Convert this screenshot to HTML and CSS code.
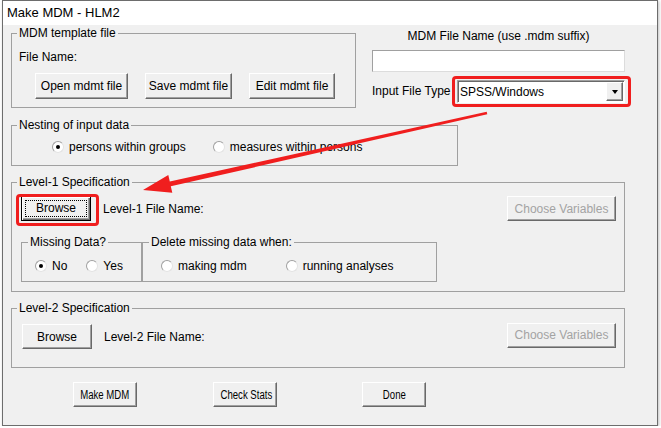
FILE: index.html
```html
<!DOCTYPE html>
<html lang="en">
<head>
  <meta charset="UTF-8" />
  <title>Make MDM - HLM2</title>
  <link rel="stylesheet" href="styles.css">
</head>
<body>

  <div class="window">
    <div class="titlebar">Make MDM - HLM2</div>

    <div class="dialog">
      <div class="top-row">
        <fieldset class="group template">
          <legend>MDM template file</legend>
          <div class="file-name">File Name:</div>
          <div class="btn-row">
            <button class="btn btn-open">Open mdmt file</button>
            <button class="btn btn-save">Save mdmt file</button>
            <button class="btn btn-edit">Edit mdmt file</button>
          </div>
        </fieldset>

        <div class="mdm-file">
          <div class="caption">MDM File Name (use .mdm suffix)</div>
          <input class="text-box" type="text" />
          <div class="type-row">
            <span class="type-label">Input File Type</span>
            <div class="combo callout callout-combo">
              <span>SPSS/Windows</span>
              <span class="combo-arrow"></span>
            </div>
          </div>
        </div>
      </div>

      <fieldset class="group nesting">
        <legend>Nesting of input data</legend>
        <div class="radio-row">
          <label class="radio checked"><span class="dot"></span>persons within groups</label>
          <label class="radio"><span class="dot"></span>measures within persons</label>
        </div>
      </fieldset>

      <fieldset class="group spec level1">
        <legend>Level-1 Specification</legend>
        <div class="spec-row">
          <span class="callout callout-browse">
            <button class="btn btn-browse focused"><span class="focus-rect">Browse</span></button>
          </span>
          <span class="spec-label">Level-1 File Name:</span>
          <button class="btn btn-choose" disabled>Choose Variables</button>
        </div>
        <div class="missing-row">
          <fieldset class="group sub missing">
            <legend>Missing Data?</legend>
            <div class="radio-row">
              <label class="radio checked"><span class="dot"></span>No</label>
              <label class="radio"><span class="dot"></span>Yes</label>
            </div>
          </fieldset>
          <fieldset class="group sub delete">
            <legend>Delete missing data when:</legend>
            <div class="radio-row">
              <label class="radio"><span class="dot"></span>making mdm</label>
              <label class="radio"><span class="dot"></span>running analyses</label>
            </div>
          </fieldset>
        </div>
      </fieldset>

      <fieldset class="group spec level2">
        <legend>Level-2 Specification</legend>
        <div class="spec-row">
          <button class="btn btn-browse">Browse</button>
          <span class="spec-label">Level-2 File Name:</span>
          <button class="btn btn-choose" disabled>Choose Variables</button>
        </div>
      </fieldset>

      <div class="actions">
        <button class="btn btn-make"><span class="narrow">Make MDM</span></button>
        <button class="btn btn-check"><span class="narrow">Check Stats</span></button>
        <button class="btn btn-done"><span class="narrow">Done</span></button>
      </div>
    </div>

    <!-- red annotation arrow -->
    <svg class="arrow" width="656" height="426" viewBox="0 0 656 426">
      <polygon fill="#f01e1e" points="140,189 169.3,191.7 167.8,185.3 484.3,113.2 483.7,110.8 166.8,180.5 165.3,174.1" />
    </svg>
  </div>

</body>
</html>
```

FILE: styles.css
```css
* {
  box-sizing: border-box;
}

body {
  margin: 0;
  background: #fff;
  font: 12px/14px "Liberation Sans", Arial, sans-serif;
  color: #000;
}

.window {
  position: relative;
  margin-left: 2px;
  width: 656px;
  height: 426px;
  border: 1px solid #6d6d6d;
  background: #f0f0f0;
  box-shadow: 1px 1px 3px rgba(0,0,0,0.25);
}

.titlebar {
  height: 24px;
  background: #fff;
  padding-left: 4px;
  font-size: 13px;
  line-height: 24px;
}

.dialog {
  padding: 1px 0 0 8px;
}

/* group boxes - horizontal padding lives on the children so the legend stays put */
.group {
  margin: 0;
  padding: 0;
  min-width: 0;
  border: 1px solid #a0a0a0;
}

.group legend {
  padding: 0 2px;
  margin-left: 5px;
  line-height: 14px;
}

.top-row {
  display: flex;
  align-items: flex-start;
}

.template {
  width: 345px;
  padding-bottom: 8px;
}

.file-name {
  margin: 10px 0 0 7px;
}

.btn-row {
  display: flex;
  gap: 17px;
  margin-top: 9px;
  padding-left: 23px;
}

.mdm-file {
  margin-left: 16px;
  width: 253px;
  padding-top: 3px;
}

.caption {
  text-align: center;
}

.text-box {
  display: block;
  margin: 7px 0 0;
  padding: 0;
  width: 253px;
  height: 22px;
  border: 1px solid;
  border-color: #a0a0a0 #dcdcdc #dcdcdc #a0a0a0;
  background: #fff;
}

.type-row {
  display: flex;
  align-items: center;
  justify-content: space-between;
  margin-top: 8px;
}

.type-label {
  margin-top: -2px;
}

.combo {
  display: flex;
  align-items: center;
  width: 168px;
  height: 23px;
  padding-left: 2px;
  background: #fff;
  border: 1px solid;
  border-color: #a0a0a0 #fff #fff #a0a0a0;
  box-shadow: inset 1px 1px #696969;
}

.combo-arrow {
  display: flex;
  align-items: center;
  justify-content: center;
  margin-left: auto;
  margin-right: 1px;
  width: 17px;
  height: 19px;
  background: #f0f0f0;
  border: 1px solid;
  border-color: #fff #696969 #696969 #fff;
  box-shadow: inset -1px -1px #a0a0a0;
}

.combo-arrow::before {
  content: "";
  border-left: 3px solid transparent;
  border-right: 3px solid transparent;
  border-top: 4px solid #000;
}

/* red call-outs drawn over the screenshot */
.callout {
  position: relative;
  display: inline-flex;
}

.callout::after {
  content: "";
  position: absolute;
  border: 3px solid #f01e1e;
  border-radius: 4px;
  pointer-events: none;
}

.callout-combo::after {
  top: -5px;
  right: -7px;
  bottom: -5px;
  left: -6px;
}

.callout-browse::after {
  top: -2px;
  right: -8px;
  bottom: -5px;
  left: -5px;
}

.arrow {
  position: absolute;
  left: 0;
  top: 0;
  pointer-events: none;
}

/* buttons */
.btn {
  font: inherit;
  color: #000;
  height: 25px;
  padding: 0;
  white-space: nowrap;
  background: #f0f0f0;
  border: 1px solid;
  border-color: #fff #696969 #696969 #fff;
  box-shadow: inset -1px -1px #a0a0a0;
}

.btn-row .btn {
  height: 26px;
}

.btn-open { width: 93px; }
.btn-save { width: 87px; }
.btn-edit { width: 86px; }

.btn-browse {
  width: 70px;
}

.btn.focused {
  border-color: #000;
  box-shadow: inset 1px 1px #fff, inset -1px -1px #696969, inset -2px -2px #a0a0a0;
}

.focus-rect {
  display: block;
  margin: 0 3px;
  line-height: 15px;
  border: 1px dotted #000;
}

.btn-choose {
  width: 109px;
  margin-left: auto;
}

.btn-choose:disabled {
  color: #a3a3a3;
}

.narrow {
  display: inline-block;
  transform: scaleX(0.8);
}

/* radios */
.radio-row {
  display: flex;
}

.radio {
  display: flex;
  align-items: center;
  gap: 5px;
}

.dot {
  display: flex;
  align-items: center;
  justify-content: center;
  width: 12px;
  height: 12px;
  border-radius: 50%;
  background: #fff;
  border: 1px solid;
  border-color: #a0a0a0 #e3e3e3 #e3e3e3 #a0a0a0;
}

.radio.checked .dot::before {
  content: "";
  width: 4px;
  height: 4px;
  border-radius: 50%;
  background: #000;
}

.nesting {
  width: 447px;
  margin-top: 10px;
  padding: 8px 0 11px;
}

.nesting .radio-row {
  gap: 27px;
  padding-left: 40px;
}

/* level specs */
.spec {
  width: 614px;
  margin-top: 9px;
  padding-right: 8px;
}

.level1 {
  padding-top: 7px;
  padding-bottom: 9px;
}

.level1 .spec-row,
.missing-row {
  margin-left: 9px;
}

.level2 {
  padding-top: 9px;
  padding-bottom: 18px;
}

.level2 .spec-row {
  margin-left: 10px;
}

.spec-row {
  display: flex;
  align-items: center;
}

.spec-label {
  margin-left: 12px;
}

.level2 .btn-choose {
  margin-top: -3px;
}

.missing-row {
  display: flex;
  margin-top: 14px;
}

.sub {
  padding-top: 10px;
  padding-bottom: 8px;
}

.sub legend {
  margin-left: 6px;
}

.missing {
  width: 121px;
}

.missing .radio-row {
  gap: 19px;
  padding-left: 13px;
}

.delete {
  width: 295px;
}

.delete .radio-row {
  gap: 39px;
  padding-left: 18px;
}

.actions {
  display: flex;
  margin-top: 14px;
}

.actions .btn {
  width: 64px;
}

.btn-make { margin-left: 62px; }
.btn-check { margin-left: 76px; }
.btn-done { margin-left: 85px; }
```
